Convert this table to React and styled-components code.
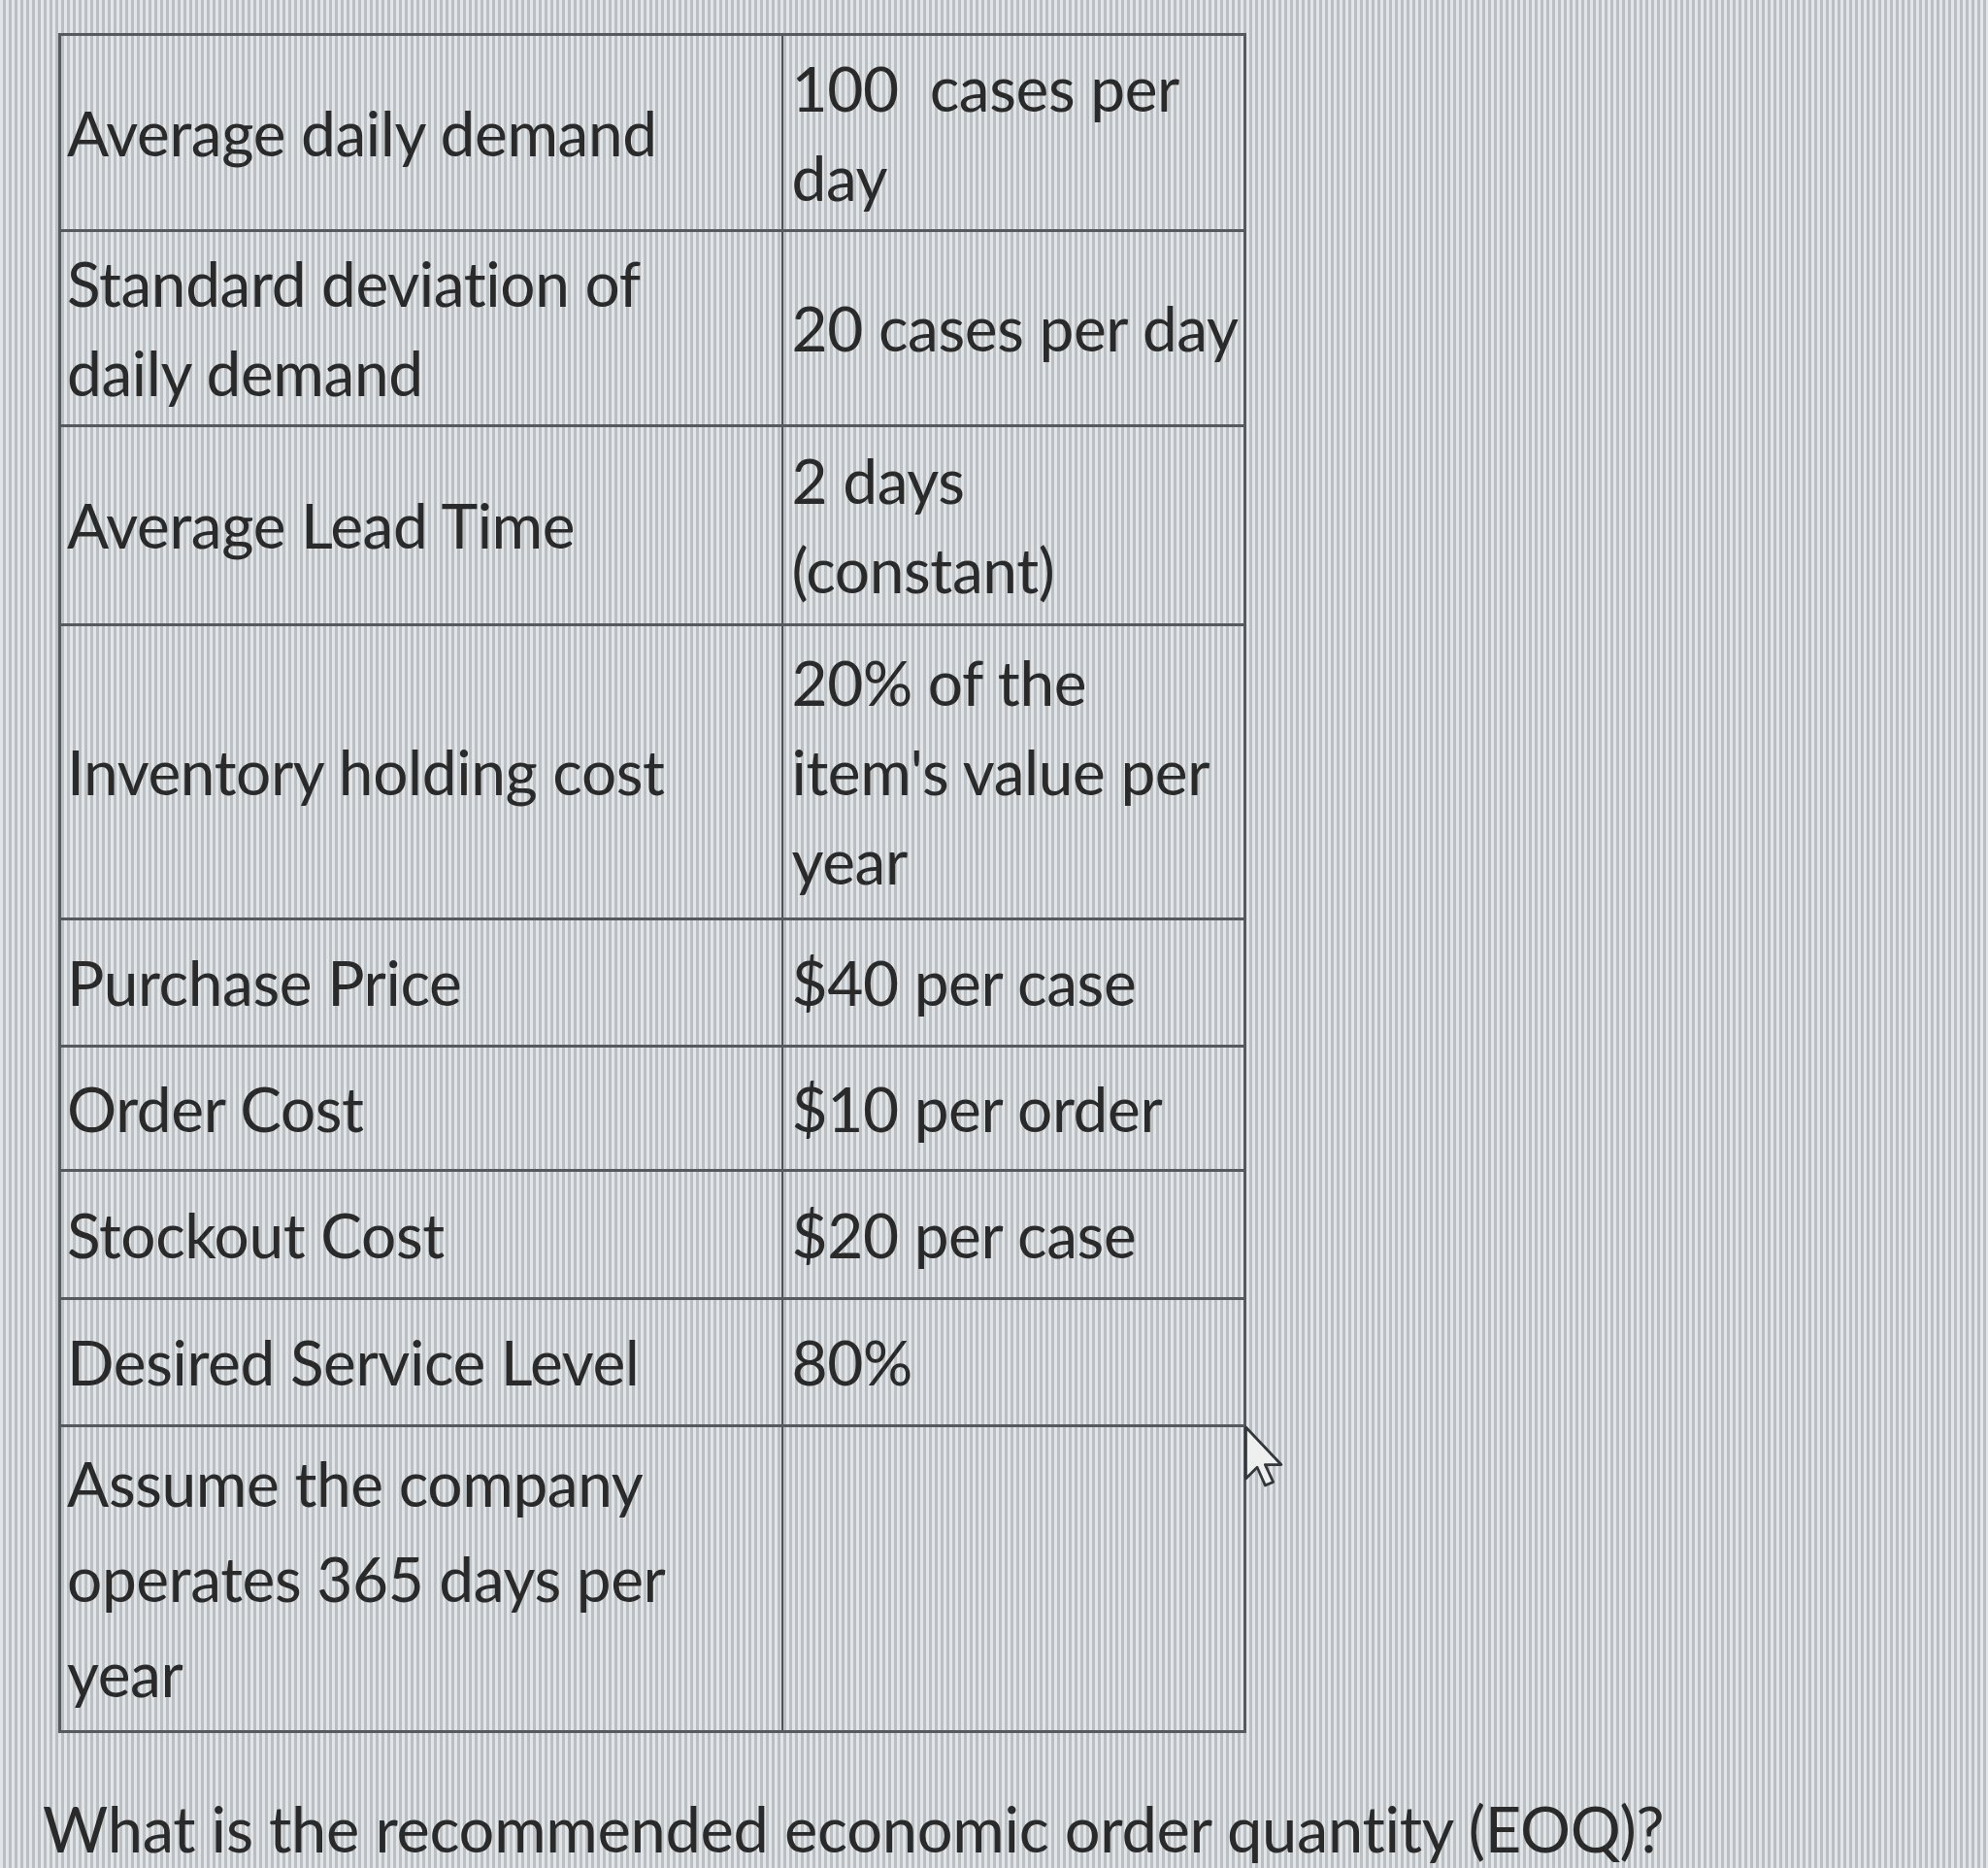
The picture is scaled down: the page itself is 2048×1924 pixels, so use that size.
import React from "react";
import styled, { createGlobalStyle } from "styled-components";

const GlobalStyle = createGlobalStyle`
  html, body {
    margin: 0;
    padding: 0;
  }
  body {
    background-color: #cfd4d6;
    background-image: repeating-linear-gradient(
      90deg,
      #e2e6e8 0px,
      #e2e6e8 3px,
      #b9bfc3 3px,
      #b9bfc3 6px
    );
    font-family: Lato, "Open Sans", sans-serif;
    color: #2a2a2a;
  }
`;

const Page = styled.div`
  position: relative;
  width: 2048px;
  height: 1924px;
  overflow: hidden;
  padding: 34px 0 0 60px;
  box-sizing: border-box;
`;

const Table = styled.table`
  border-collapse: collapse;
  width: 1224px;
  table-layout: fixed;
  border: 3px solid #555a5c;
`;

const Row = styled.tr`
  border-bottom: 3px solid #555a5c;
`;

const Cell = styled.td`
  box-sizing: border-box;
  width: ${({ $wide }) => ($wide ? "744px" : "auto")};
  height: ${({ $h }) => $h}px;
  padding: 0 ${({ $wide }) => ($wide ? "6px" : "9px")};
  font-size: 64px;
  line-height: ${({ $lh }) => $lh || 92}px;
  vertical-align: middle;
  white-space: pre;
  border-right: 2px solid #4d5254;
  letter-spacing: -0.4px;
`;

const Question = styled.p`
  margin: 58px 0 0 -16px;
  font-size: 65px;
  line-height: 80px;
  letter-spacing: -0.3px;
  white-space: nowrap;
`;

const Cursor = styled.svg`
  position: absolute;
  left: 1281px;
  top: 1468px;
  width: 42px;
  height: 66px;
`;

const rows = [
  ["Average daily demand", "100  cases per\nday", 202],
  ["Standard deviation of\ndaily demand", "20 cases per day", 201],
  ["Average Lead Time", "2 days\n(constant)", 205],
  ["Inventory holding cost", "20% of the\nitem's value per\nyear", 303],
  ["Purchase Price", "$40 per case", 131],
  ["Order Cost", "$10 per order", 128],
  ["Stockout Cost", "$20 per case", 132],
  ["Desired Service Level", "80%", 131],
];

export default function App() {
  return (
    <>
      <GlobalStyle />
      <Page>
        <Table>
          <tbody>
            {rows.map(([label, value, h]) => (
              <Row key={label}>
                <Cell $wide $h={h}>
                  {label}
                </Cell>
                <Cell $h={h}>{value}</Cell>
              </Row>
            ))}
            <Row>
              <Cell $wide $h={315} $lh={98}>
                {"Assume the company\noperates 365 days per\nyear"}
              </Cell>
              <Cell $h={315} />
            </Row>
          </tbody>
        </Table>
        <Question>What is the recommended economic order quantity (EOQ)?</Question>
        <Cursor viewBox="0 0 30 48">
          <path
            d="M1.5 1.5 L1.5 40 L10 31.5 L16 45 L22 42.5 L16 29.5 L28 29.5 Z"
            fill="#eef0f0"
            stroke="#33373a"
            strokeWidth="2"
            strokeLinejoin="round"
          />
        </Cursor>
      </Page>
    </>
  );
}
